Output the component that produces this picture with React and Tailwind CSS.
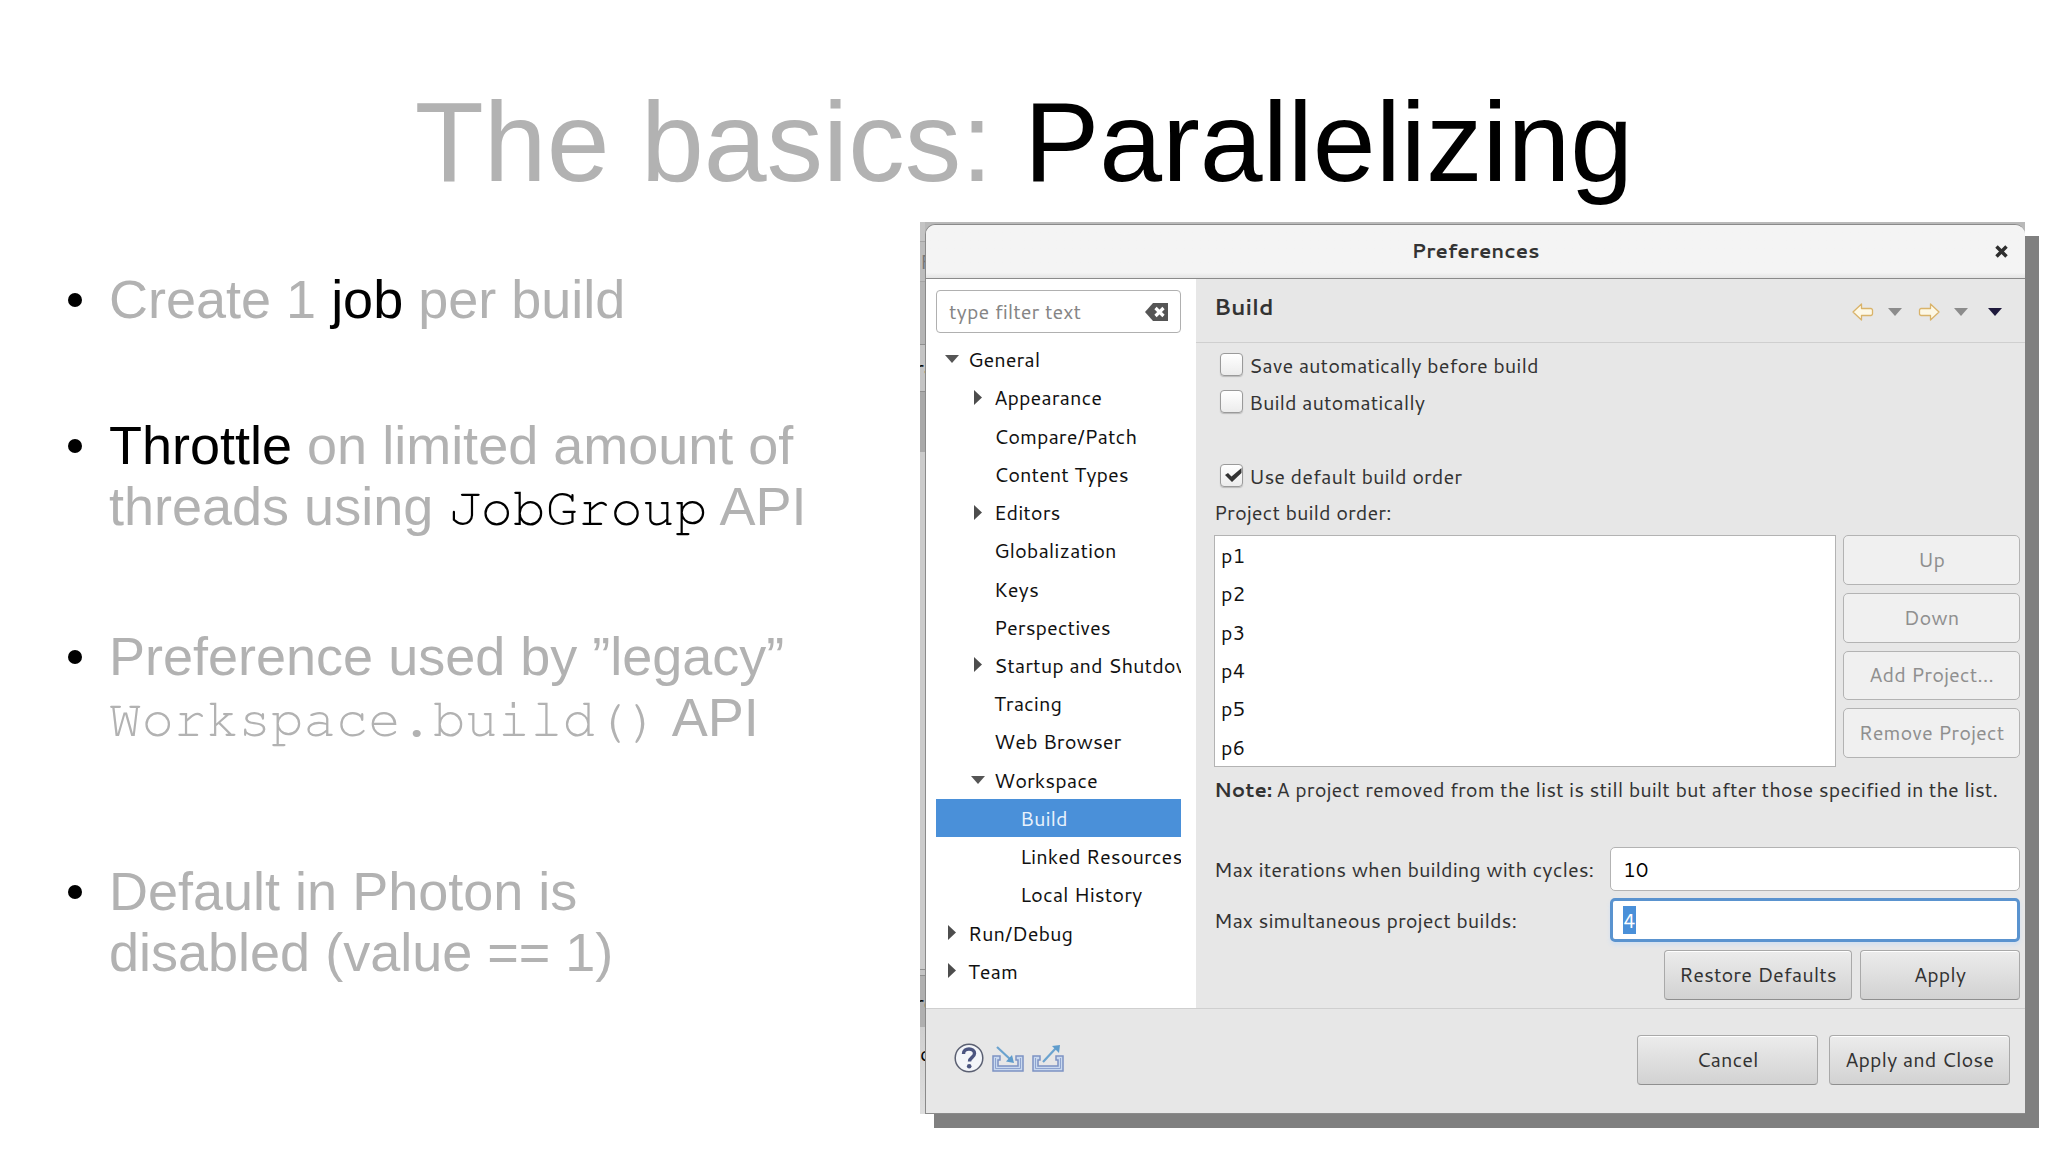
import { useEffect, useRef, useState } from 'react';

const treeItems = [
  { label: 'General', level: 0, state: 'open' },
  { label: 'Appearance', level: 1, state: 'closed' },
  { label: 'Compare/Patch', level: 1 },
  { label: 'Content Types', level: 1 },
  { label: 'Editors', level: 1, state: 'closed' },
  { label: 'Globalization', level: 1 },
  { label: 'Keys', level: 1 },
  { label: 'Perspectives', level: 1 },
  { label: 'Startup and Shutdown', level: 1, state: 'closed' },
  { label: 'Tracing', level: 1 },
  { label: 'Web Browser', level: 1 },
  { label: 'Workspace', level: 1, state: 'open' },
  { label: 'Build', level: 2 },
  { label: 'Linked Resources', level: 2 },
  { label: 'Local History', level: 2 },
  { label: 'Run/Debug', level: 0, state: 'closed' },
  { label: 'Team', level: 0, state: 'closed' },
];

const indent = ['pl-0', 'pl-[26px]', 'pl-[52px]'];
const projects = ['p1', 'p2', 'p3', 'p4', 'p5', 'p6'];

function Expander({ state }) {
  return (
    <span className="flex w-8 shrink-0 justify-center">
      {state === 'open' && (
        <svg width="14" height="8" viewBox="0 0 14 8" className="fill-[#555]">
          <path d="M0 0h14L7 8z" />
        </svg>
      )}
      {state === 'closed' && (
        <svg width="8" height="15" viewBox="0 0 8 15" className="fill-[#4d4d4d]">
          <path d="M0 0v15l8-7.500z" />
        </svg>
      )}
    </span>
  );
}

function Caret({ className }) {
  return (
    <svg width="14" height="8" viewBox="0 0 14 8" className={className}>
      <path d="M0 0h14L7 8z" />
    </svg>
  );
}

function HistoryArrow({ className = '' }) {
  return (
    <svg width="22" height="18" viewBox="0 0 22 18" className={className}>
      <path
        d="M1 9l8.500-8v4.500H19a2 2 0 0 1 1.500 1.500v4a2 2 0 0 1-1.500 1.500H9.500V17z"
        fill="#fdf8e6"
        stroke="#d9b36a"
        strokeWidth="1.300"
        strokeLinejoin="round"
      />
    </svg>
  );
}

function TrayIcon({ children }) {
  return (
    <svg width="32" height="30" viewBox="0 0 32 30" fill="none">
      <path
        d="M1 13h7v4H6v6h20v-6h-2v-4h7v15H1z"
        fill="#c9d9ef"
        stroke="#7d93c4"
        strokeWidth="1.500"
      />
      <path d="M3.500 15v10.500h25V15" stroke="#8ea3cf" strokeWidth="1" />
      {children}
    </svg>
  );
}

function PushButton({ className = '', children }) {
  return (
    <button
      type="button"
      className={`h-[50px] rounded-[4px] border border-[#a9a9a9] border-b-[#8f8f8f] bg-linear-to-b from-[#ececec] to-[#d2d2d2] pb-[2px] text-[#333] shadow-[inset_0_1px_0_#fff] ${className}`}
    >
      {children}
    </button>
  );
}

function CheckBox({ label, defaultChecked }) {
  return (
    <label className="flex h-[37px] items-center gap-[6px] pl-[6px]">
      <span className="relative flex">
        <input
          type="checkbox"
          defaultChecked={defaultChecked}
          className="peer h-[23px] w-[23px] appearance-none rounded-[4px] border border-[#9a9a9a] bg-linear-to-b from-white to-[#ececec] shadow-[0_1px_1px_#bbb]"
        />
        <svg
          viewBox="0 0 23 23"
          className="pointer-events-none absolute inset-0 hidden fill-[#333] peer-checked:block"
        >
          <path d="M5 11l3-2 3.500 3.500L21.500 4v5L12 18z" />
        </svg>
      </span>
      {label}
    </label>
  );
}

// Sliver of the IDE window that shows to the left of the dialog.
function WindowBehind() {
  return (
    <div
      aria-hidden="true"
      className="flex w-[5px] shrink-0 flex-col overflow-hidden bg-[#c4c4c4] text-[20px] leading-[20px] whitespace-nowrap text-black"
    >
      <div className="h-5 border-b border-[#a5a5a5]" />
      <div className="h-10 border-b border-[#a5a5a5] bg-[#bcbcbc] pt-[9px] text-[#777]">F</div>
      <div className="h-[63px] border-b border-[#8f8f8f] bg-[#b5b5b5]" />
      <div className="h-[47px] border-b border-[#8f8f8f] bg-[#c4c4c4] pt-3 -indent-1">ra</div>
      <div className="h-[60px] bg-[#a9a9a9]" />
      <div className="flex-1 bg-[#cbcbcb]" />
      <div className="h-[7px] border-y border-[#8f8f8f]" />
      <div className="h-[51px] bg-[#b0b0b0] pt-4 -indent-1">re</div>
      <div className="h-[87px] bg-linear-to-b from-[#cfcfcf] to-[#dedede] pt-4">c</div>
    </div>
  );
}

function PageTree() {
  return (
    <aside className="w-[270px] shrink-0 bg-white pr-[15px] pl-[10px] pt-[11px]">
      <div className="flex h-[43px] items-center rounded-[4px] border border-[#b0b0b0] px-3">
        <input
          type="text"
          aria-label="Filter"
          placeholder="type filter text"
          className="min-w-0 flex-1 bg-transparent pb-[2px] placeholder:text-[#858585] focus:outline-none"
        />
        <button type="button" aria-label="Clear filter">
          <svg width="23" height="18" viewBox="0 0 23 18">
            <path d="M0 9l8-9h15v18H8z" fill="#555" />
            <path d="M10.500 5l8 8m0-8l-8 8" stroke="#fff" strokeWidth="3.200" />
          </svg>
        </button>
      </div>
      <ul className="mt-[7px] grid h-[650px] auto-rows-fr text-[#111]">
        {treeItems.map((item) => (
          <li
            key={item.label}
            className={`flex items-center overflow-hidden whitespace-nowrap ${indent[item.level]} ${
              item.label === 'Build' ? 'bg-[#4a90d9] text-[#e8f2fc]' : ''
            }`}
          >
            <Expander state={item.state} />
            {item.label}
          </li>
        ))}
      </ul>
    </aside>
  );
}

function BuildPage() {
  const [iterations, setIterations] = useState('10');
  const [builds, setBuilds] = useState('4');
  const buildsRef = useRef(null);

  useEffect(() => {
    buildsRef.current?.focus();
    buildsRef.current?.select();
  }, []);

  return (
    <section className="min-w-0 flex-1 bg-[#e7e7e7]">
      <header className="flex h-16 items-center justify-between border-b border-[#cfcfcf] pr-[23px] pl-[18px]">
        <h3 className="pb-2 text-[22px] font-bold">Build</h3>
        <div className="flex items-center pt-[3px]">
          <button type="button" aria-label="Back">
            <HistoryArrow />
          </button>
          <button type="button" aria-label="Back history" className="ml-[14px]">
            <Caret className="fill-[#8c8c8c]" />
          </button>
          <button type="button" aria-label="Forward" className="ml-4">
            <HistoryArrow className="rotate-180" />
          </button>
          <button type="button" aria-label="Forward history" className="ml-[14px]">
            <Caret className="fill-[#8c8c8c]" />
          </button>
          <button type="button" aria-label="View menu" className="ml-5">
            <Caret className="fill-[#1f1a3d]" />
          </button>
        </div>
      </header>

      <div className="pt-[3px] pr-[5px] pb-2 pl-[18px]">
        <CheckBox label="Save automatically before build" />
        <CheckBox label="Build automatically" />
        <div className="h-[37px]" />
        <CheckBox label="Use default build order" defaultChecked />
        <div className="flex h-[41px] items-center pb-[6px]">Project build order:</div>

        <div className="flex items-start gap-[7px]">
          <ul className="grid h-[232px] flex-1 auto-rows-fr border border-[#b3b3b3] bg-white text-[#111]">
            {projects.map((p) => (
              <li key={p} className="flex items-center pl-[6px]">
                {p}
              </li>
            ))}
          </ul>
          <div className="grid h-[223px] w-[177px] auto-rows-fr gap-2">
            {['Up', 'Down', 'Add Project...', 'Remove Project'].map((label) => (
              <button
                key={label}
                type="button"
                disabled
                className="rounded-[5px] border border-[#b3b3b3] bg-[#f0f0f0] pb-[2px] text-[#8f8f8f]"
              >
                {label}
              </button>
            ))}
          </div>
        </div>

        <p className="flex h-11 items-center gap-1 whitespace-nowrap">
          <b>Note:</b> A project removed from the list is still built but after those specified in
          the list.
        </p>

        <div className="mt-9 grid grid-cols-[384px_1fr] items-center gap-x-3 gap-y-[7px]">
          <label htmlFor="max-iterations">Max iterations when building with cycles:</label>
          <input
            id="max-iterations"
            type="text"
            value={iterations}
            onChange={(e) => setIterations(e.target.value)}
            className="h-11 w-full rounded-[5px] border border-[#b3b3b3] bg-white px-3 text-black focus:outline-none"
          />
          <label htmlFor="max-builds">Max simultaneous project builds:</label>
          <input
            id="max-builds"
            ref={buildsRef}
            type="text"
            value={builds}
            onChange={(e) => setBuilds(e.target.value)}
            className="h-11 w-full rounded-[5px] border-3 border-[#5a93cf] bg-white px-[10px] text-black shadow-[0_3px_4px_#d3e0f0] selection:bg-[#4a90d9] selection:text-white focus:outline-none"
          />
        </div>

        <div className="mt-2 flex justify-end gap-2">
          <PushButton className="w-[188px]">Restore Defaults</PushButton>
          <PushButton className="w-[160px]">Apply</PushButton>
        </div>
      </div>
    </section>
  );
}

function PreferencesDialog() {
  return (
    <div className="flex self-start bg-[#b9b9b9] font-['Cantarell','Open_Sans',sans-serif] text-[20px] leading-[30px] text-[#333] shadow-[14px_14px_0_#808080]">
      <WindowBehind />
      <div
        role="dialog"
        aria-labelledby="dialog-title"
        className="mt-[2px] min-w-0 flex-1 overflow-hidden rounded-t-[10px] border border-r-0 border-[#8a8a8a] bg-[#e7e7e7]"
      >
        <div className="flex h-[54px] items-center border-b border-[#8a8a8a] bg-linear-to-b from-[#f4f4f4] from-90% to-[#e4e4e4] pr-[17px] pl-[30px]">
          <h2 id="dialog-title" className="flex-1 pb-[3px] text-center font-bold">
            Preferences
          </h2>
          <button type="button" aria-label="Close">
            <svg width="13" height="13" viewBox="0 0 13 13">
              <path d="M1.500 1.500l10 10m0-10l-10 10" stroke="#2e2e2e" strokeWidth="3.500" />
            </svg>
          </button>
        </div>

        <div className="flex">
          <PageTree />
          <BuildPage />
        </div>

        <footer className="flex h-[105px] items-center border-t border-[#cfcfcf] pr-[15px] pb-[2px] pl-7">
          <div className="flex items-center gap-2 pb-[5px]">
            <button type="button" aria-label="Help">
              <svg width="30" height="30" viewBox="0 0 30 30" fill="none">
                <circle cx="15" cy="15" r="13.800" fill="#f3f5f9" stroke="#5b6072" strokeWidth="1.500" />
                <path
                  d="M9.500 11c0-3.500 2.500-5 5.500-5s5.500 1.600 5.500 4.500c0 3.800-5 4-5 8"
                  stroke="#4b5580"
                  strokeWidth="3.400"
                />
                <circle cx="15.200" cy="23.300" r="2.300" fill="#4b5580" />
              </svg>
            </button>
            <button type="button" aria-label="Import preferences">
              <TrayIcon>
                <path d="M5 4l14 13" stroke="#6ba3cf" strokeWidth="2.200" />
                <path d="M22 20l-8-1.500 6-6.500z" fill="#5f9ccc" />
              </TrayIcon>
            </button>
            <button type="button" aria-label="Export preferences">
              <TrayIcon>
                <path d="M11 19L24 5" stroke="#6ba3cf" strokeWidth="2.200" />
                <path d="M28 2l-8 1 7 7z" fill="#5f9ccc" />
              </TrayIcon>
            </button>
          </div>
          <div className="ml-auto flex gap-[11px]">
            <PushButton className="w-[181px]">Cancel</PushButton>
            <PushButton className="w-[181px]">Apply and Close</PushButton>
          </div>
        </footer>
      </div>
    </div>
  );
}

function Bullet({ className = '', children }) {
  return (
    <li className={`flex ${className}`}>
      <span className="mt-6 mr-[27px] ml-[68px] h-[14px] w-[14px] shrink-0 rounded-full bg-black" />
      <p>{children}</p>
    </li>
  );
}

function Code({ className = '', children }) {
  return (
    <code className={`font-['FreeMono','Liberation_Mono',monospace] leading-none ${className}`}>
      {children}
    </code>
  );
}

export default function App() {
  return (
    <main className="min-h-screen bg-white pt-[86px] pb-[22px] font-['Liberation_Sans',Arial,sans-serif] text-[#b2b2b2]">
      <h1 className="text-center text-[113px] leading-[113px]">
        The basics: <span className="text-black">Parallelizing</span>
      </h1>

      <div className="mt-[23px] grid grid-cols-[920fr_1105fr] pr-[23px]">
        <ul className="pt-[47px] text-[54px] leading-[61px] whitespace-nowrap">
          <Bullet>
            Create 1 <span className="text-black">job</span> per build
          </Bullet>
          <Bullet className="mt-[85px]">
            <span className="text-black">Throttle</span> on limited amount of
            <br />
            threads using <Code className="text-black">JobGroup</Code> API
          </Bullet>
          <Bullet className="mt-[89px]">
            Preference used by ”legacy”
            <br />
            <Code>Workspace.build()</Code> API
          </Bullet>
          <Bullet className="mt-[113px]">
            Default in Photon is
            <br />
            disabled (value == 1)
          </Bullet>
        </ul>
        <PreferencesDialog />
      </div>
    </main>
  );
}
